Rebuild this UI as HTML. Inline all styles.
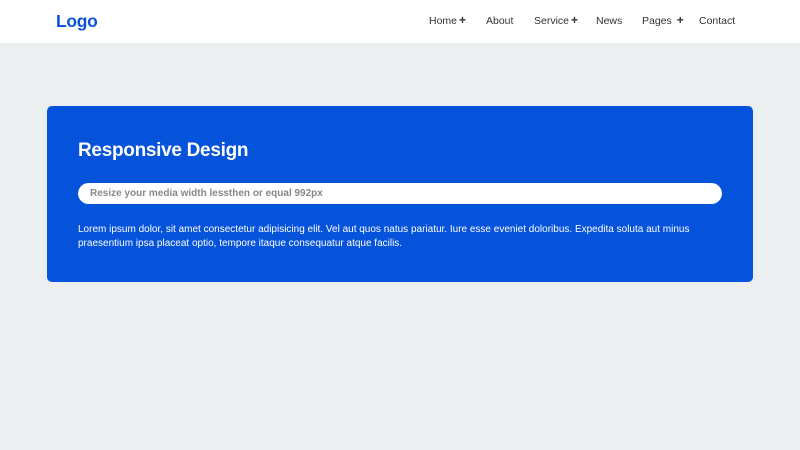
<!DOCTYPE html>
<html><head><meta charset="utf-8"><style>
*{margin:0;padding:0;box-sizing:border-box}
body{width:800px;height:450px;background:#ebeff0;font-family:"Liberation Sans",sans-serif;position:relative;overflow:hidden}
.hdr{position:absolute;left:0;top:0;width:800px;height:43px;background:#fff}
.logo{position:absolute;left:56px;top:11px;font-size:17.5px;font-weight:bold;color:#0a52d6;letter-spacing:-0.3px}
.nav{position:absolute;top:15px;font-size:10.5px;line-height:13px;color:#333}
.nav b{font-size:12px;line-height:0;margin-left:2px}
.card{position:absolute;left:47px;top:106px;width:706px;height:176px;background:#0552db;border-radius:5px}
h1{position:absolute;left:31px;top:34px;font-size:19px;color:#fff;font-weight:bold;letter-spacing:-0.3px}
.inp{position:absolute;left:31px;top:77px;width:644px;height:21px;background:#fff;border-radius:11px;font-size:10px;color:#888;font-weight:bold;padding:5px 0 0 12px}
p{position:absolute;left:31px;top:117px;width:640px;font-size:10px;line-height:14px;color:#fff}
</style></head><body>
<div class="hdr">
<div class="logo">Logo</div>
<span class="nav" style="left:429px">Home<b>+</b></span>
<span class="nav" style="left:486px">About</span>
<span class="nav" style="left:534px">Service<b>+</b></span>
<span class="nav" style="left:596px">News</span>
<span class="nav" style="left:642px">Pages <b>+</b></span>
<span class="nav" style="left:699px">Contact</span>
</div>
<div class="card">
<h1>Responsive Design</h1>
<div class="inp">Resize your media width lessthen or equal 992px</div>
<p>Lorem ipsum dolor, sit amet consectetur adipisicing elit. Vel aut quos natus pariatur. Iure esse eveniet doloribus. Expedita soluta aut minus praesentium ipsa placeat optio, tempore itaque consequatur atque facilis.</p>
</div>
</body></html>
